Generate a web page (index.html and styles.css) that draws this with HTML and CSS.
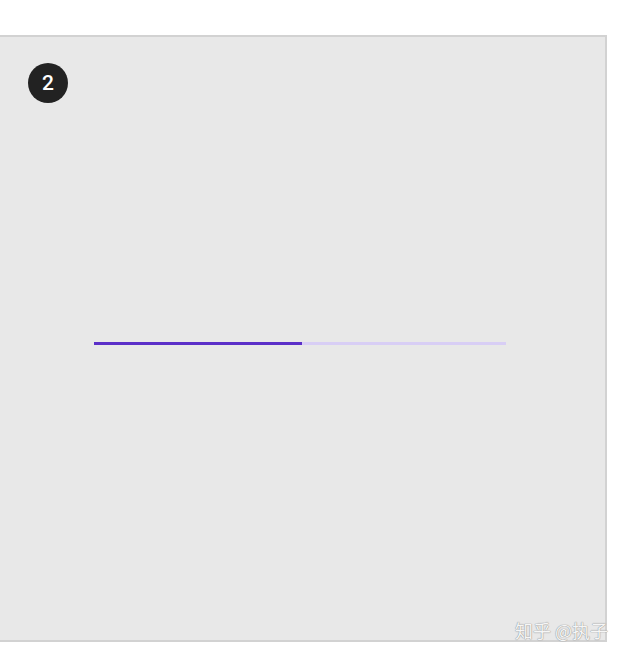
FILE: index.html
```html
<!DOCTYPE html>
<html lang="zh">
<head>
<meta charset="utf-8">
<link rel="stylesheet" href="styles.css">
</head>
<body>
<div class="stage">
  <div class="panel">
    <div class="step">2</div>
    <div class="track-wrap">
      <div class="track">
        <div class="fill" style="width: 50.6%"></div>
      </div>
    </div>
  </div>
  <div class="mark">知乎 @执子</div>
</div>
</body>
</html>
```
FILE: styles.css
```css
html, body {
  margin: 0;
  padding: 0;
  background: #ffffff;
}

.stage {
  position: relative;
  width: 624px;
  height: 658px;
  padding-top: 35px;
  box-sizing: border-box;
}

.panel {
  width: 607px;
  height: 607px;
  box-sizing: border-box;
  background: #e8e8e8;
  border-top: 2px solid #d2d2d2;
  border-right: 2px solid #d2d2d2;
  border-bottom: 2px solid #d2d2d2;
  padding: 26px 0 0 28px;
  display: flex;
  flex-direction: column;
}

.step {
  width: 40px;
  height: 40px;
  border-radius: 50%;
  background: #222222;
  color: #ffffff;
  font-family: Roboto, "Liberation Sans", sans-serif;
  font-weight: 500;
  font-size: 21px;
  display: flex;
  align-items: center;
  justify-content: center;
}

.track-wrap {
  padding: 239px 0 0 66px;
}

.track {
  width: 412px;
  height: 3px;
  background: #d8cef5;
}

.fill {
  height: 100%;
  background: #5b2fc8;
}

.mark {
  position: absolute;
  right: 16px;
  top: 618px;
  font-family: "Noto Sans CJK SC", sans-serif;
  font-size: 18px;
  line-height: 24px;
  color: #f6f6f6;
  text-shadow: 0 0 1px #8e8e8e, 0 0 1px #8e8e8e;
}
```
